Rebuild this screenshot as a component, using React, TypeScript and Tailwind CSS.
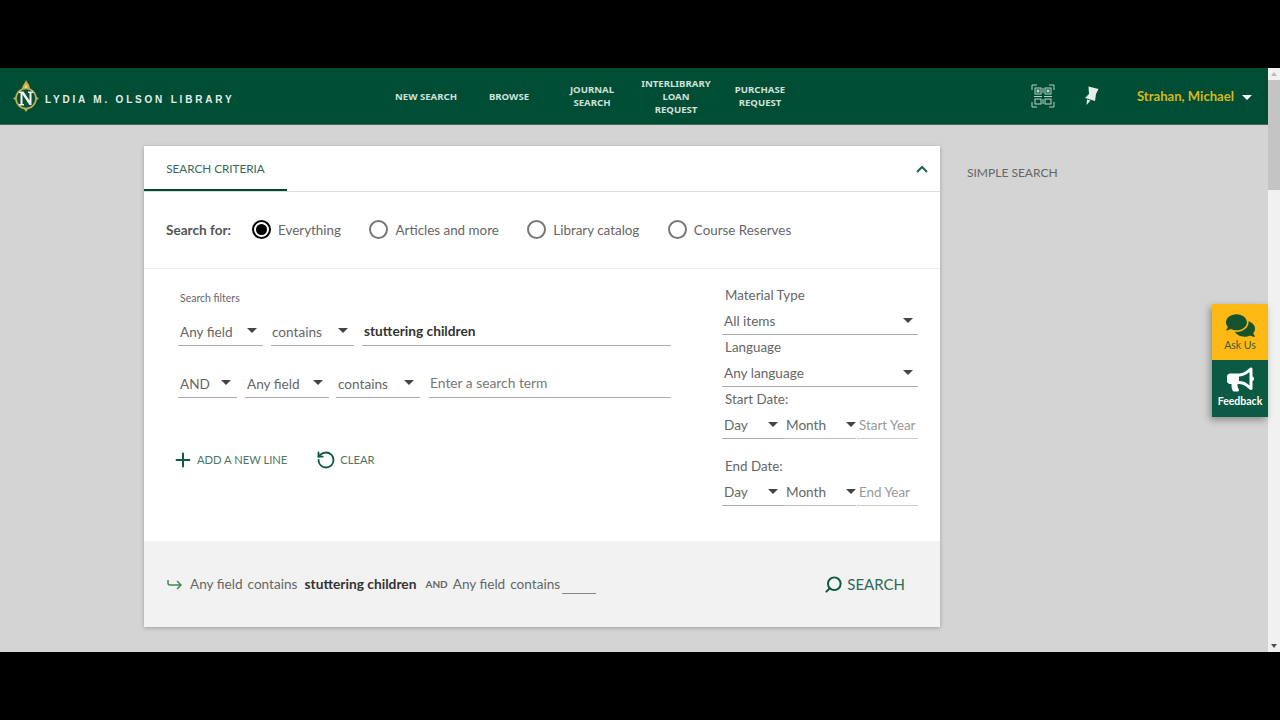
import { FaBullhorn, FaComments } from 'react-icons/fa';
import { Plus, RotateCcw, Search } from 'lucide-react';

const sans = "font-['Lato','Noto_Sans',sans-serif]";

function Caret({ className = '' }: { className?: string }) {
  return (
    <span
      className={`inline-block h-0 w-0 border-x-[5px] border-t-[5px] border-x-transparent border-t-[#444] ${className}`}
    />
  );
}

function Select({ label, className }: { label: string; className: string }) {
  return (
    <div className={`flex h-[29px] items-center justify-between border-b border-[#aaa] pt-[2px] ${className}`}>
      <span className="text-[13.6px] text-[#666]">{label}</span>
      <Caret className="mb-[2px]" />
    </div>
  );
}

function Radio({ label, checked }: { label: string; checked?: boolean }) {
  return (
    <label className="flex items-center gap-[7px]">
      <span
        className={`flex h-[19px] w-[19px] items-center justify-center rounded-full border-2 ${
          checked ? 'border-black' : 'border-[#777]'
        }`}
      >
        {checked && <span className="h-[11px] w-[11px] rounded-full bg-black" />}
      </span>
      <span className="text-[13.4px] text-[#666]">{label}</span>
    </label>
  );
}

function NavItem({ lines }: { lines: string[] }) {
  return (
    <a className="flex flex-col items-center text-center font-['Noto_Sans',sans-serif] text-[9.6px] font-bold leading-[13px] text-[#cfe0d8]">
      {lines.map((l) => (
        <span key={l}>{l}</span>
      ))}
    </a>
  );
}

function Logo() {
  return (
    <svg width="28" height="34" viewBox="0 0 28 34" className="shrink-0">
      <path d="M14 1c1 3 5 5 3.500 10h-7C9 7 13 5 14 1z" fill="#d0ae4a" />
      <path d="M14 5c.500 2 1.500 3 1 5h-2c-.500-2 .500-3 1-5z" fill="#f1e3a8" />
      <circle cx="14" cy="19.500" r="10" fill="#0c4f37" stroke="#b9b15a" strokeWidth="1.6" />
      <path d="M1 19.500l3-2v4zM27 19.500l-3-2v4zM14 33l-2-3h4z" fill="#b9b15a" />
      <path d="M7 12.500h4.500l6 9v-7.500h-1.500v-1.500h5V14h-1.500v12h-2l-7-10.500V25H12v1.500H7V25h1.500V14H7z" fill="#f2f5ee" />
    </svg>
  );
}

function QrIcon() {
  return (
    <svg width="24" height="24" viewBox="0 0 24 24" fill="none" stroke="#b9d3c8" strokeWidth="1">
      <path d="M1 6V1h5M18 1h5v5M1 18v5h5M23 18v5h-5" />
      <rect x="4" y="4" width="6" height="6" />
      <rect x="14" y="4" width="6" height="6" />
      <rect x="4" y="15" width="6" height="5" />
      <rect x="14" y="15" width="6" height="5" />
      <path d="M3 12.500h8M13 12.500h8M12 4v5M12 15v5" />
      <rect x="6" y="6" width="2" height="2" fill="#b9d3c8" />
      <rect x="16" y="6" width="2" height="2" fill="#b9d3c8" />
    </svg>
  );
}

function PinIcon() {
  return (
    <svg width="16" height="20" viewBox="0 0 16 20" className="shrink-0">
      <path d="M4.500.5L14.500 3l-2.500 5-1 7L1 12l4-4zM3 13.500l3.500 1L2.500 19z" fill="#e3efe9" />
    </svg>
  );
}

export default function App() {
  return (
    <div className={`flex h-[720px] w-[1280px] flex-col overflow-hidden bg-black pb-[68px] pt-[68px] ${sans}`}>
      <div className="relative flex min-h-0 flex-1">
        <div className="flex min-w-0 flex-1 flex-col bg-[#d4d4d4]">
          <header className="flex h-[57px] shrink-0 items-center border-b border-[#3b6a58] bg-[#004d35]">
            <div className="flex w-[379px] shrink-0 items-center gap-[5px] pl-[12px]">
              <Logo />
              <span className="mt-[6px] font-['Liberation_Sans',sans-serif] text-[10px] font-bold tracking-[2.8px] text-[#e4ece8]">
                LYDIA M. OLSON LIBRARY
              </span>
            </div>
            <nav className="flex items-center">
              <div className="w-[94px]"><NavItem lines={['NEW SEARCH']} /></div>
              <div className="w-[72px]"><NavItem lines={['BROWSE']} /></div>
              <div className="ml-[5px] w-[84px]"><NavItem lines={['JOURNAL', 'SEARCH']} /></div>
              <div className="w-[84px]"><NavItem lines={['INTERLIBRARY', 'LOAN', 'REQUEST']} /></div>
              <div className="w-[84px]"><NavItem lines={['PURCHASE', 'REQUEST']} /></div>
            </nav>
            <div className="ml-auto flex items-center pr-[16px]">
              <QrIcon />
              <div className="ml-[29px]"><PinIcon /></div>
              <span className="ml-[37px] mt-[2px] text-[13.1px] font-bold text-[#d4b81c]">Strahan, Michael</span>
              <span className="ml-[8px] mt-[3px] h-0 w-0 border-x-[5.5px] border-t-[5.5px] border-x-transparent border-t-white" />
            </div>
          </header>

          <main className="flex flex-1 items-start pl-[144px] pt-[21px]">
            <section className="flex w-[796px] flex-col bg-white shadow-[0_1px_4px_rgba(0,0,0,0.25)]">
              <div className="flex h-[46px] items-stretch justify-between border-b border-[#ddd]">
                <div className="flex w-[143px] items-center justify-center border-b-2 border-[#00492f] pt-[3px] text-[11.7px] text-[#38695a]">
                  SEARCH CRITERIA
                </div>
                <svg width="12" height="8" viewBox="0 0 12 8" className="mr-[12px] mt-[19px]" fill="none" stroke="#1f6350" strokeWidth="2">
                  <path d="M1 7l5-5 5 5" />
                </svg>
              </div>

              <div className="flex h-[77px] items-center gap-[21px] border-b border-[#eee] pl-[22px]">
                <span className="text-[13.6px] font-bold text-[#555]">Search for:</span>
                <div className="flex items-center gap-[28.5px]">
                  <Radio label="Everything" checked />
                  <Radio label="Articles and more" />
                  <Radio label="Library catalog" />
                  <Radio label="Course Reserves" />
                </div>
              </div>

              <div className="flex h-[272px]">
                <div className="w-[578px] pl-[34px] pt-[22px]">
                  <div className="pl-[2px] text-[10.5px] text-[#666]">Search filters</div>
                  <div className="mt-[10px] flex gap-[8px]">
                    <Select label="Any field" className="w-[85px] pl-[2px] pr-[6px]" />
                    <Select label="contains" className="w-[83px] pl-[1px] pr-[6px]" />
                    <div className="flex h-[29px] w-[309px] items-center border-b border-[#aaa] pl-[2px] pt-[2px] text-[13.7px] font-bold text-[#333]">
                      stuttering children
                    </div>
                  </div>
                  <div className="mt-[23px] flex">
                    <Select label="AND" className="w-[59px] pl-[2px] pr-[6px]" />
                    <Select label="Any field" className="ml-[8px] w-[84px] pl-[2px] pr-[6px]" />
                    <Select label="contains" className="ml-[7px] w-[84px] pl-[2px] pr-[6px]" />
                    <div className="ml-[9px] flex h-[29px] w-[242px] items-center border-b border-[#aaa] pl-[1px] pt-[2px] text-[13.8px] text-[#777]">
                      Enter a search term
                    </div>
                  </div>
                  <div className="-ml-[6px] mt-[51px] flex items-center text-[11.2px] text-[#4d7567]">
                    <Plus size={22} strokeWidth={2.2} className="text-[#0d5a42]" />
                    <span className="ml-[3px] mt-[2px]">ADD A NEW LINE</span>
                    <RotateCcw size={20} strokeWidth={2.2} className="ml-[29px] text-[#0d5a42]" />
                    <span className="ml-[4px] mt-[2px]">CLEAR</span>
                  </div>
                </div>

                <div className="w-[196px] pt-[17px] text-[13.4px] text-[#666]">
                  <div className="pl-[3px] leading-[18px]">Material Type</div>
                  <Select label="All items" className="mt-[2px] w-full pl-[2px] pr-[5px]" />
                  <div className="mt-[3px] pl-[3px] leading-[18px]">Language</div>
                  <Select label="Any language" className="mt-[2px] w-full pl-[2px] pr-[5px]" />
                  <div className="mt-[3px] pl-[3px] leading-[18px]">Start Date:</div>
                  <div className="mt-[2px] flex">
                    <Select label="Day" className="w-[62px] pl-[2px] pr-[6px]" />
                    <Select label="Month" className="w-[72px] border-[#bbb] pl-[2px]" />
                    <div className="ml-px flex h-[29px] flex-1 items-center whitespace-nowrap border-b border-[#ccc] pl-[2px] pt-[2px] text-[#999]">Start Year</div>
                  </div>
                  <div className="mt-[18px] pl-[3px] leading-[18px]">End Date:</div>
                  <div className="mt-[2px] flex">
                    <Select label="Day" className="w-[62px] pl-[2px] pr-[6px]" />
                    <Select label="Month" className="w-[72px] border-[#bbb] pl-[2px]" />
                    <div className="ml-px flex h-[29px] flex-1 items-center whitespace-nowrap border-b border-[#ccc] pl-[2px] pt-[2px] text-[#999]">End Year</div>
                  </div>
                </div>
              </div>

              <div className="flex h-[86px] items-center bg-[#f2f2f2] pl-[23px] pr-[35px] text-[13.6px] text-[#666]">
                <svg width="15" height="11" viewBox="0 0 15 11" fill="none" stroke="#3d8a58" strokeWidth="1.5">
                  <path d="M1 1v3q0 2 2 2h11M10 2l4 4-4 4" />
                </svg>
                <span className="ml-[8px]">Any field</span>
                <span className="ml-[5px]">contains</span>
                <span className="ml-[7px] text-[13.75px] font-bold text-[#333]">stuttering children</span>
                <span className="ml-[9px] text-[10px] font-bold">AND</span>
                <span className="ml-[5px]">Any field</span>
                <span className="ml-[5px]">contains</span>
                <span className="ml-[2px] mt-[18px] h-px w-[34px] bg-[#888]" />
                <button className="ml-auto flex items-center gap-[4px] text-[15px] text-[#2e6a57]">
                  <Search size={19} strokeWidth={2.5} className="-scale-x-100 text-[#0d5a42]" />
                  SEARCH
                </button>
              </div>
            </section>
            <div className="ml-[27px] mt-[18px] text-[12px] text-[#666]">SIMPLE SEARCH</div>
          </main>
        </div>

        <div className="flex w-[12px] shrink-0 flex-col bg-[#f1f1f1]">
          <div className="flex h-[12px] items-center justify-center">
            <span className="h-0 w-0 border-x-[3.5px] border-b-[4px] border-x-transparent border-b-[#bbb]" />
          </div>
          <div className="h-[110px] bg-[#c4c4c4]" />
          <div className="flex-1" />
          <div className="flex h-[12px] items-center justify-center">
            <span className="h-0 w-0 border-x-[3.5px] border-t-[4px] border-x-transparent border-t-[#505050]" />
          </div>
        </div>

        <aside className="absolute right-[12px] top-[236px] flex w-[56px] flex-col shadow-[-2px_3px_7px_rgba(0,0,0,0.35)]">
          <div className="flex h-[56px] flex-col items-center bg-[#fdb913] pt-[7px] text-[#14532d]">
            <FaComments className="text-[29px]" />
            <span className="-mt-[1px] text-[10.5px] leading-[13px] text-[#3d5a3c]">Ask Us</span>
          </div>
          <div className="flex h-[57px] flex-col items-center bg-[#0b5a43] pt-[6px] text-white">
            <FaBullhorn className="text-[27px]" />
            <span className="mt-[2px] text-[10.5px] font-bold leading-[13px]">Feedback</span>
          </div>
        </aside>
      </div>
    </div>
  );
}
